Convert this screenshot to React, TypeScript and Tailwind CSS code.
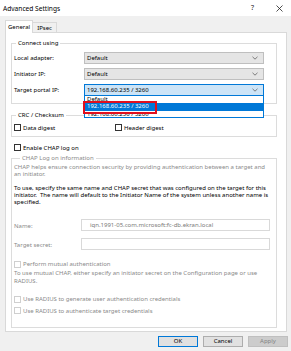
import React from 'react';

function Chevron() {
  return (
    <svg width="6" height="4" viewBox="0 0 6 4" className="shrink-0">
      <path d="M0.5 0.8 L3 3.2 L5.5 0.8" fill="none" stroke="#606060" strokeWidth="0.8" />
    </svg>
  );
}

function Combo({ value, focused }: { value: string; focused?: boolean }) {
  return (
    <div
      className={
        'w-[180px] h-[12px] flex items-center pl-[2px] pr-[5px] border ' +
        (focused ? 'bg-[#cce4f7] border-[#0078d7]' : 'bg-[#e5e5e5] border-[#bfbfbf]')
      }
    >
      <span className="flex-1 whitespace-nowrap">{value}</span>
      <Chevron />
    </div>
  );
}

function Check({ label, disabled }: { label: string; disabled?: boolean }) {
  return (
    <div className="flex items-center h-[7px] gap-[2px]">
      <div className={'w-[7px] h-[7px] bg-white border ' + (disabled ? 'border-[#cfcfcf]' : 'border-[#333333]')} />
      <span className={'whitespace-nowrap ' + (disabled ? 'text-[#8a8a8a]' : '')}>{label}</span>
    </div>
  );
}

function TextRow({ label, value }: { label: string; value?: string }) {
  return (
    <div className="flex items-center h-[12px]">
      <span className="w-[67px] pt-[2px] text-[#8a8a8a] whitespace-nowrap">{label}</span>
      <div className="w-[189px] h-[12px] border border-[#d9d9d9] bg-white flex items-center pl-[8px] text-[#7a7a7a] whitespace-nowrap">
        {value}
      </div>
    </div>
  );
}

export default function App() {
  const rows = [
    { label: 'Local adapter:', value: 'Default' },
    { label: 'Initiator IP:', value: 'Default' },
  ];

  return (
    <div className="w-[291px] h-[351px] bg-[#f0f0f0] font-['Noto_Sans',sans-serif] text-[6px] leading-[8px] text-black flex flex-col overflow-hidden">
      {/* title bar */}
      <div className="h-[16px] bg-white flex items-center pl-[3px]">
        <span className="flex-1 text-[6.6px] pt-[1px]">Advanced Settings</span>
        <span className="text-[7px] mr-[22px] text-[#222]">?</span>
        <svg width="7" height="7" viewBox="0 0 7 7" className="mr-[8px]">
          <path d="M0.5 0.5 L6.5 6.5 M6.5 0.5 L0.5 6.5" stroke="#222" strokeWidth="0.8" />
        </svg>
      </div>

      {/* tabs */}
      <div className="mt-[4px] h-[12px] flex items-end pl-[5px] relative z-10">
        <div className="h-[13px] -mb-[1px] px-[2px] bg-white border border-b-0 border-[#d9d9d9] flex items-center">General</div>
        <div className="h-[10px] px-[4px] bg-[#f0f0f0] border border-l-0 border-b-0 border-[#d9d9d9] flex items-center">IPsec</div>
      </div>

      {/* tab page */}
      <div className="ml-[5px] w-[282px] h-[300px] bg-white border border-[#d9d9d9] pl-[5px] flex flex-col">
        {/* Connect using */}
        <fieldset className="mt-[6px] w-[266px] border border-[#dcdcdc] pl-[2px] pt-[5px] pb-[7px]">
          <legend className="ml-[2px] px-[2px] leading-[8px]">Connect using</legend>
          <div className="flex flex-col gap-[4px]">
            {rows.map(r => (
              <div key={r.label} className="flex items-center h-[12px]">
                <span className="w-[70px] whitespace-nowrap">{r.label}</span>
                <Combo value={r.value} />
              </div>
            ))}
            <div className="flex items-center h-[12px] relative">
              <span className="w-[70px] whitespace-nowrap">Target portal IP:</span>
              <Combo value="192.168.60.235 / 3260" focused />
              {/* open list */}
              <div className="absolute left-[70px] top-[12px] w-[180px] h-[22px] bg-white border border-t-0 border-[#0078d7] z-20 flex flex-col leading-[7.3px]">
                <div className="h-[7.5px] pl-[2px]">Default</div>
                <div className="h-[7.5px] pl-[2px] bg-[#0078d7] text-white">192.168.60.235 / 3260</div>
                <div className="h-[7px] pl-[2px]">192.168.60.236 / 3260</div>
              </div>
              <div className="absolute left-[69px] top-[17px] w-[74px] h-[13px] border-2 border-[#e0101e] z-30" />
            </div>
          </div>
        </fieldset>

        {/* CRC / Checksum */}
        <fieldset className="mt-[7px] w-[266px] border border-[#dcdcdc] pl-[2px] pt-[5px] pb-[5px]">
          <legend className="ml-[2px] px-[2px] leading-[8px]">CRC / Checksum</legend>
          <div className="flex">
            <div className="w-[101px]">
              <Check label="Data digest" />
            </div>
            <Check label="Header digest" />
          </div>
        </fieldset>

        <div className="mt-[7px] ml-[3px]">
          <Check label="Enable CHAP log on" />
        </div>

        {/* CHAP Log on information */}
        <fieldset className="mt-[3px] mb-[3px] flex-1 w-[266px] border border-[#dcdcdc] pl-[2px] pt-[2px]">
          <legend className="ml-[6px] px-[2px] leading-[8px] text-[#8a8a8a]">CHAP Log on information</legend>
          <p className="text-[#8a8a8a] leading-[7px] whitespace-nowrap">
            CHAP helps ensure connection security by providing authentication between a target and
            <br />
            an initiator.
          </p>
          <p className="mt-[7px] leading-[7.2px] whitespace-nowrap">
            To use, specify the same name and CHAP secret that was configured on the target for this
            <br />
            initiator.&nbsp; The name will default to the Initiator Name of the system unless another name is
            <br />
            specified.
          </p>
          <div className="mt-[12px] flex flex-col gap-[7px]">
            <TextRow label="Name:" value="iqn.1991-05.com.microsoft:fc-db.ekran.local" />
            <TextRow label="Target secret:" />
          </div>
          <div className="mt-[11px]">
            <Check label="Perform mutual authentication" disabled />
          </div>
          <p className="mt-[2.5px] text-[#8a8a8a] leading-[7.5px] whitespace-nowrap">
            To use mutual CHAP, either specify an initiator secret on the Configuration page or use
            <br />
            RADIUS.
          </p>
          <div className="mt-[10.5px] flex flex-col gap-[4.5px]">
            <Check label="Use RADIUS to generate user authentication credentials" disabled />
            <Check label="Use RADIUS to authenticate target credentials" disabled />
          </div>
        </fieldset>
      </div>

      {/* buttons */}
      <div className="mt-[4px] flex justify-end gap-[5px] pr-[3px]">
        <button className="w-[40px] h-[11px] bg-[#e1e1e1] border border-[#0078d7] leading-[9px]">OK</button>
        <button className="w-[40px] h-[11px] bg-[#e1e1e1] border border-[#adadad] leading-[9px]">Cancel</button>
        <button className="w-[40px] h-[11px] bg-[#cccccc] border border-[#bfbfbf] text-[#838383] leading-[9px]">Apply</button>
      </div>
    </div>
  );
}
